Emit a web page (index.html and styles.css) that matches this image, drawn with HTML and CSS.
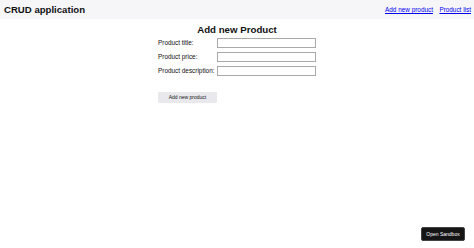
FILE: index.html
```html
<!DOCTYPE html>
<html lang="en">
<head>
<meta charset="utf-8">
<title>CRUD application</title>
<link rel="stylesheet" href="styles.css">
</head>
<body>
<header class="topbar">
  <h1 class="brand">CRUD application</h1>
  <nav class="nav">
    <a href="#" class="nav-link">Add new product</a>
    <a href="#" class="nav-link">Product list</a>
  </nav>
</header>
<main class="page">
  <h2 class="page-title">Add new Product</h2>
  <form class="product-form">
    <div class="fields">
      <label class="field-label" for="title">Product title:</label>
      <input class="field-input" id="title" type="text">
      <label class="field-label" for="price">Product price:</label>
      <input class="field-input" id="price" type="text">
      <label class="field-label" for="desc">Product description:</label>
      <input class="field-input" id="desc" type="text">
    </div>
    <div class="actions">
      <button class="submit-btn" type="button">Add new product</button>
    </div>
  </form>
</main>
<button class="sandbox-btn" type="button">Open Sandbox</button>
</body>
</html>
```
FILE: styles.css
```css
html, body {
  margin: 0;
  padding: 0;
  background: #ffffff;
  font-family: "Liberation Sans", Arial, sans-serif;
  color: #000;
}

.topbar {
  display: flex;
  justify-content: space-between;
  align-items: center;
  height: 19px;
  padding: 0 3px 0 4px;
  background: #f6f6f9;
}

.brand {
  margin: 0;
  font-size: 9.6px;
  font-weight: bold;
  color: #111;
  line-height: 11px;
}

.nav {
  display: flex;
  gap: 6.4px;
  font-size: 6.4px;
  line-height: 8px;
  padding-top: 1px;
}

.nav-link {
  color: #0000ee;
  text-decoration: underline;
}

.page {
  display: flex;
  flex-direction: column;
  align-items: center;
}

.page-title {
  margin: 5px 0 3px;
  font-size: 9.7px;
  line-height: 11px;
  font-weight: bold;
  color: #111;
}

.product-form {
  display: flex;
  flex-direction: column;
  gap: 16px;
  margin: 0;
}

.fields {
  display: grid;
  grid-template-columns: 59px 99px;
  grid-auto-rows: 10px;
  row-gap: 4px;
}

.field-label {
  font-size: 6.4px;
  line-height: 10px;
  color: #111;
  white-space: nowrap;
}

.field-input {
  box-sizing: border-box;
  width: 99px;
  height: 10px;
  margin: 0;
  padding: 0;
  border: 1px solid #a9a9a9;
  background: #fff;
}

.actions {
  display: flex;
}

.submit-btn {
  display: block;
  width: 59px;
  height: 11px;
  margin: 0;
  padding: 0;
  border: none;
  border-radius: 1px;
  background: #e9e9ed;
  font-family: "Liberation Sans", Arial, sans-serif;
  font-size: 5px;
  line-height: 11px;
  color: #111;
}

.sandbox-btn {
  position: fixed;
  right: 9px;
  bottom: 7px;
  width: 44px;
  height: 14px;
  padding: 0;
  border: 1px solid #444;
  border-radius: 2px;
  background: #151515;
  color: #fff;
  font-family: "Liberation Sans", Arial, sans-serif;
  font-size: 5px;
}
```
